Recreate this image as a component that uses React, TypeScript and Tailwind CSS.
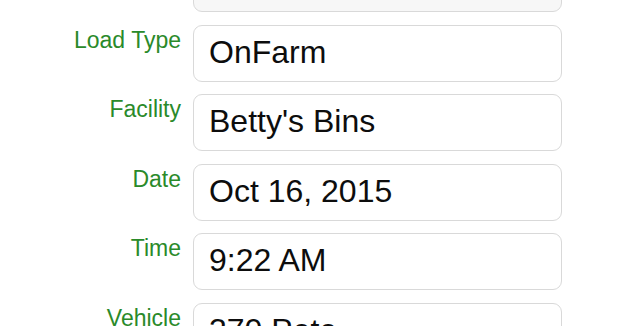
import React from "react";

const rows: { label: string; value: string }[] = [
  { label: "", value: "Jay" },
  { label: "Load Type", value: "OnFarm" },
  { label: "Facility", value: "Betty's Bins" },
  { label: "Date", value: "Oct 16, 2015" },
  { label: "Time", value: "9:22 AM" },
  { label: "Vehicle", value: "370 Pete" },
];

export default function App() {
  return (
    <div
      className="w-[620px] h-[326px] overflow-hidden bg-white"
      style={{ fontFamily: '"Liberation Sans", Arial, sans-serif' }}
    >
      <div className="flex flex-col gap-[12.5px] mt-[-45px]">
        {rows.map((r, i) => (
          <div key={i} className="flex">
            <div className="w-[181px] shrink-0 text-right text-[23px] leading-[23px] pt-[4px] text-[#2a8a2a]">
              {r.label}
            </div>
            <div
              className={
                "ml-[12px] w-[369px] h-[57px] shrink-0 rounded-[9px] border border-[#d9d9d9] pl-[15px] pt-[10px] text-[32px] leading-[32px] text-[#0d0d0d] " +
                (i === 0 ? "bg-[#f7f7f7]" : "bg-white")
              }
            >
              {r.value}
            </div>
          </div>
        ))}
      </div>
    </div>
  );
}
